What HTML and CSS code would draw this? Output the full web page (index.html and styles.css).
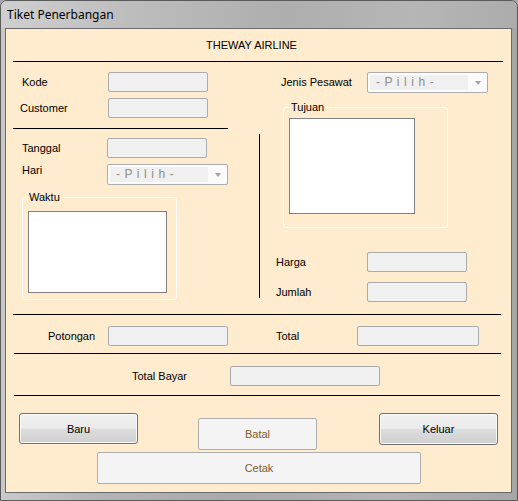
FILE: index.html
```html
<!DOCTYPE html>
<html>
<head>
<meta charset="utf-8">
<title>Tiket Penerbangan</title>
<link rel="stylesheet" href="styles.css">
</head>
<body>
<div class="window">
  <div class="titlebar">Tiket Penerbangan</div>
  <div class="client">
    <div class="header">THEWAY AIRLINE</div>

    <div class="section-main">
      <div class="col-left">
        <div class="row r-kode">
          <span class="lbl" style="margin-left:9px;width:86px">Kode</span>
          <span class="textbox w100"></span>
        </div>
        <div class="row r-customer">
          <span class="lbl" style="margin-left:7px;width:88px">Customer</span>
          <span class="textbox w100"></span>
        </div>
        <div class="hline l-left"></div>
        <div class="row r-tanggal">
          <span class="lbl" style="margin-left:9px;width:85px">Tanggal</span>
          <span class="textbox w100"></span>
        </div>
        <div class="row r-hari">
          <span class="lbl lbl-top" style="margin-left:9px;width:85px">Hari</span>
          <div class="combo"><span class="combo-text">- P i l i h -</span><span class="combo-arrow"></span></div>
        </div>
        <fieldset class="group g-waktu">
          <legend>Waktu</legend>
          <div class="listbox lb-waktu"></div>
        </fieldset>
      </div>

      <div class="vline"></div>

      <div class="col-right">
        <div class="row r-jenis">
          <span class="lbl" style="margin-left:21px;width:86px">Jenis Pesawat</span>
          <div class="combo"><span class="combo-text">- P i l i h -</span><span class="combo-arrow"></span></div>
        </div>
        <fieldset class="group g-tujuan">
          <legend>Tujuan</legend>
          <div class="listbox lb-tujuan"></div>
        </fieldset>
        <div class="row r-harga">
          <span class="lbl" style="margin-left:16px;width:91px">Harga</span>
          <span class="textbox w100"></span>
        </div>
        <div class="row r-jumlah">
          <span class="lbl" style="margin-left:16px;width:91px">Jumlah</span>
          <span class="textbox w100"></span>
        </div>
      </div>
    </div>

    <div class="row r-potongan">
      <span class="lbl" style="margin-left:35px;width:60px">Potongan</span>
      <span class="textbox w120"></span>
      <span class="lbl" style="margin-left:48px;width:81px">Total</span>
      <span class="textbox w122"></span>
    </div>
    <div class="hline l-4"></div>
    <div class="row r-bayar">
      <span class="lbl" style="margin-left:119px;width:98px">Total Bayar</span>
      <span class="textbox w150"></span>
    </div>
    <div class="hline l-5"></div>

    <div class="buttons">
      <div class="btn btn-raised b-baru">Baru</div>
      <div class="btn btn-flat b-batal">Batal</div>
      <div class="btn btn-raised b-keluar">Keluar</div>
    </div>
    <div class="buttons2">
      <div class="btn btn-flat b-cetak">Cetak</div>
    </div>
  </div>
</div>
</body>
</html>
```

FILE: styles.css
```css
html, body {
  margin: 0;
  padding: 0;
  background: #a9a9a9;
}

.window {
  width: 518px;
  height: 501px;
  box-sizing: border-box;
  border: 1px solid #5a5a5a;
  border-radius: 7px 7px 0 0;
  background: linear-gradient(90deg, #c9c9c9 0%, #b4b4b4 18%, #a9a9a9 45%, #b3b3b3 75%, #a6a6a6 100%);
  overflow: hidden;
  font-family: "Liberation Sans", Arial, sans-serif;
  font-size: 11px;
  color: #000;
}

.titlebar {
  height: 27px;
  line-height: 27px;
  padding-left: 6px;
  font-family: "Noto Sans", "Open Sans", sans-serif;
  font-size: 12px;
  color: #000;
  background: linear-gradient(90deg, #cfcfcf 0%, #bdbdbd 25%, #aeaeae 55%, #b6b6b6 80%, #acacac 100%);
}

.client {
  margin-left: 4px;
  width: 507px;
  height: 465px;
  box-sizing: border-box;
  border: 1px solid #6a6a6a;
  background: #ffebcd;
}

.header {
  margin-left: 7px;
  width: 490px;
  height: 32px;
  line-height: 32px;
  text-align: center;
  text-indent: -13px;
  border-bottom: 1px solid #000;
}

.section-main {
  margin-left: 7px;
  width: 488px;
  height: 253px;
  box-sizing: border-box;
  border-bottom: 1px solid #000;
  display: flex;
}

.col-left {
  width: 246px;
  flex: none;
}

.col-right {
  flex: 1;
}

.vline {
  width: 1px;
  height: 164px;
  margin-top: 72px;
  background: #000;
  flex: none;
}

.row {
  display: flex;
  align-items: center;
  height: 20px;
}

.lbl {
  display: block;
  flex: none;
  white-space: nowrap;
  line-height: 13px;
}

.lbl-top {
  align-self: flex-start;
}

.textbox {
  display: block;
  height: 20px;
  box-sizing: border-box;
  border: 1px solid #ababab;
  border-radius: 2px;
  background: #f0f0f0;
  flex: none;
}

.w100 { width: 100px; }
.w120 { width: 120px; }
.w122 { width: 122px; }
.w150 { width: 150px; }

.combo {
  width: 121px;
  height: 21px;
  box-sizing: border-box;
  border: 1px solid #adadad;
  border-radius: 2px;
  background: #fbfbfb;
  display: flex;
  align-items: stretch;
  padding: 2px 0 2px 2px;
  flex: none;
}

.combo-text {
  flex: 1;
  background: #f0f0f0;
  color: #8d8d8d;
  font-size: 12px;
  line-height: 15px;
  padding-left: 6px;
  letter-spacing: 0.6px;
  white-space: pre;
}

.combo-arrow {
  width: 19px;
  flex: none;
  display: flex;
  align-items: center;
  justify-content: center;
}

.combo-arrow::before {
  content: "";
  width: 0;
  height: 0;
  border-left: 3.5px solid transparent;
  border-right: 3.5px solid transparent;
  border-top: 4px solid #a3a3a3;
  margin-top: 1px;
}

.hline {
  height: 1px;
  background: #000;
}

.l-left {
  width: 215px;
  margin-top: 10px;
}

.r-kode { margin-top: 10px; }
.r-customer { margin-top: 6px; }
.r-tanggal { margin-top: 9px; }
.r-hari { margin-top: 6px; height: 21px; }

.group {
  box-sizing: border-box;
  margin: 0;
  padding: 0 0 0 5px;
  border: 1px solid #fdfcfa;
  border-radius: 3px;
  min-width: 0;
}

.group legend {
  font-size: 11px;
  line-height: 13px;
  padding: 0 1px;
  margin-left: 0;
}

.listbox {
  box-sizing: border-box;
  background: #fff;
  border: 1px solid #828282;
}

.g-waktu {
  margin-top: 6px;
  margin-left: 9px;
  width: 155px;
  height: 109px;
}

.lb-waktu {
  margin-top: 7px;
  width: 139px;
  height: 82px;
}

.r-jenis { margin-top: 10px; height: 21px; }

.g-tujuan {
  margin-top: 8px;
  margin-left: 23px;
  width: 165px;
  height: 127px;
}

.g-tujuan legend {
  margin-left: 1px;
}

.lb-tujuan {
  margin-top: 4px;
  width: 126px;
  height: 96px;
}

.r-harga { margin-top: 24px; }
.r-jumlah { margin-top: 10px; }

.r-potongan {
  margin-left: 7px;
  margin-top: 11px;
}

.l-4 {
  margin-left: 8px;
  width: 487px;
  margin-top: 7px;
}

.r-bayar {
  margin-left: 7px;
  margin-top: 12px;
}

.l-5 {
  margin-left: 8px;
  width: 486px;
  margin-top: 9px;
}

.buttons {
  display: flex;
  align-items: flex-start;
  margin-top: 17px;
}

.buttons2 {
  display: flex;
  margin-top: 2px;
}

.btn {
  box-sizing: border-box;
  display: flex;
  align-items: center;
  justify-content: center;
  font-size: 11px;
  flex: none;
}

.btn-raised {
  border: 1px solid #707070;
  border-radius: 3px;
  background: linear-gradient(#f2f2f2 0%, #ebebeb 48%, #dddddd 52%, #cfcfcf 100%);
  box-shadow: inset 0 0 0 1px #fbfbfb;
  color: #000;
}

.btn-flat {
  border: 1px solid #adadad;
  border-radius: 2px;
  background: #f4f4f4;
  color: #7f5c28;
}

.b-baru {
  margin-left: 13px;
  width: 119px;
  height: 31px;
}

.b-batal {
  margin-left: 60px;
  margin-top: 5px;
  width: 119px;
  height: 32px;
}

.b-keluar {
  margin-left: 62px;
  width: 119px;
  height: 32px;
}

.b-cetak {
  margin-left: 91px;
  width: 324px;
  height: 32px;
}
```
